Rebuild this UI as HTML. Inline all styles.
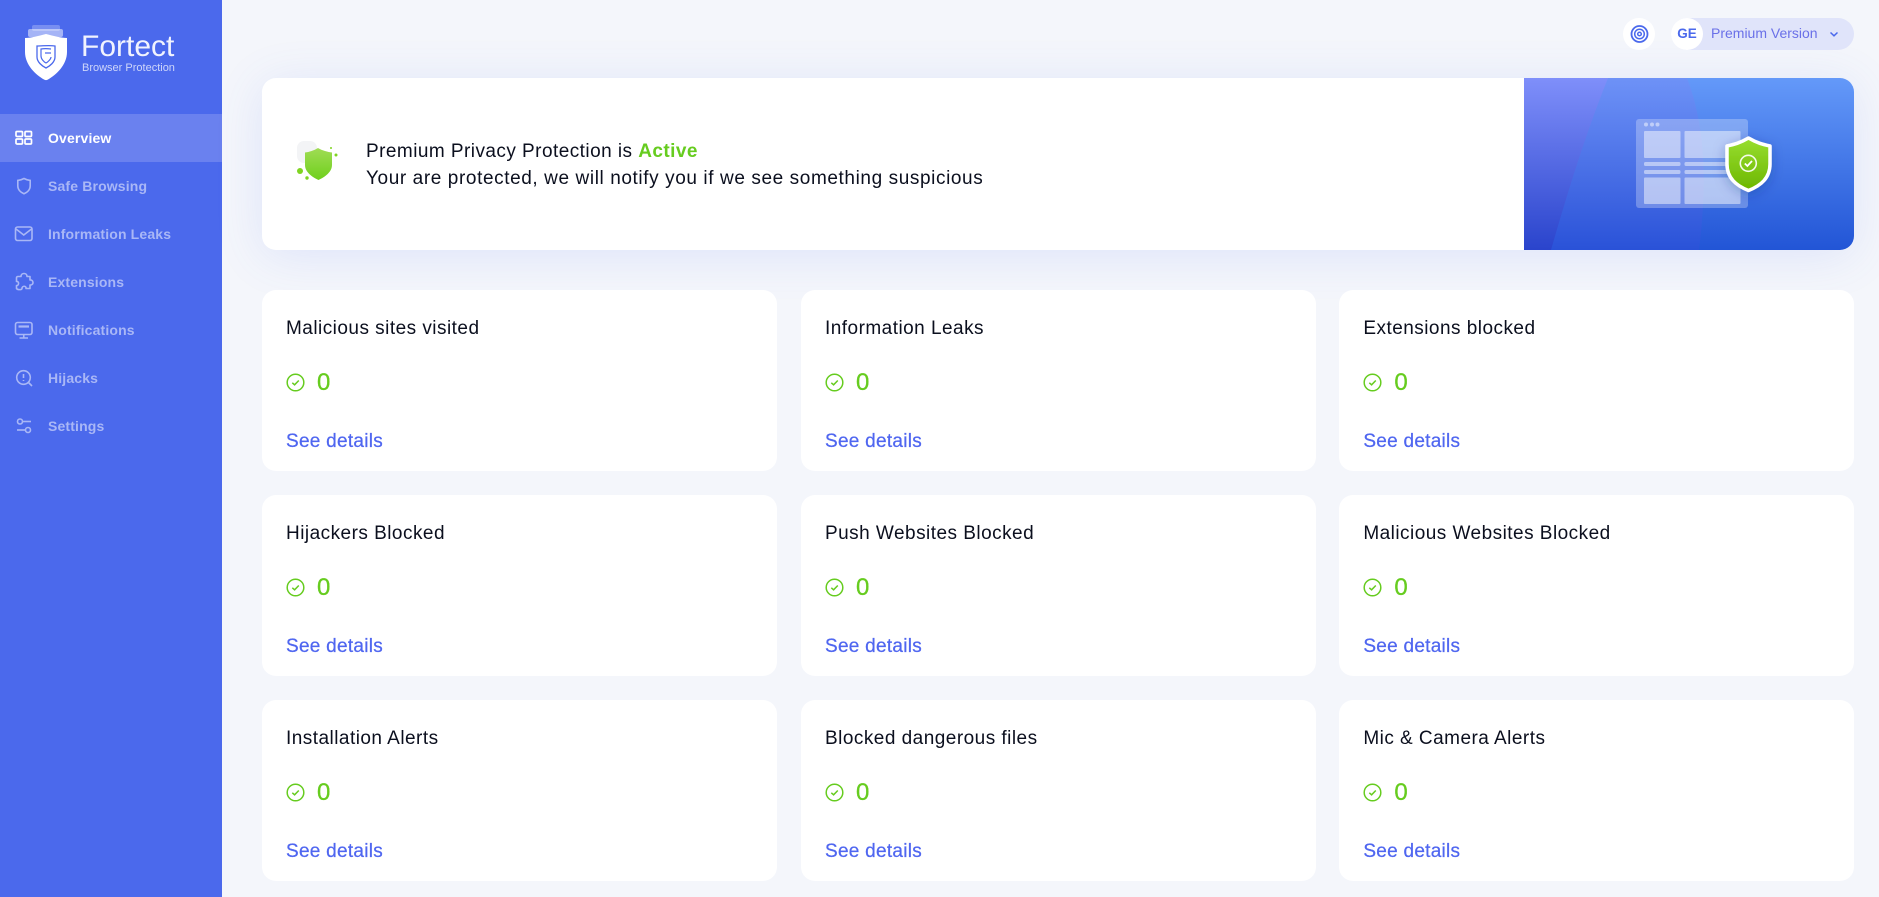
<!DOCTYPE html>
<html lang="en">
<head>
<meta charset="utf-8">
<title>Fortect Browser Protection</title>
<style>
*{margin:0;padding:0;box-sizing:border-box}
html,body{width:1879px;height:897px;overflow:hidden;background:#f4f6fb;font-family:"Liberation Sans",sans-serif}
#side{position:absolute;left:0;top:0;width:222px;height:897px;background:#4b69ec}
.nav{position:absolute;left:0;width:222px;height:48px;line-height:48px;padding-left:48px;font-size:14px;font-weight:700;letter-spacing:.15px;color:#a9b7f6}
.nav.on{background:#6a81ef;color:#fff}
.nav svg{position:absolute;left:14px;top:14px}
.card{position:absolute;width:514.67px;height:181px;background:#fff;border-radius:14px}
.t{position:absolute;left:24px;top:25px;line-height:28px;font-size:19px;letter-spacing:.47px;color:#0b0f1e;white-space:nowrap}
.c{position:absolute;left:24px;top:83px}
.n{position:absolute;left:55px;top:79px;line-height:28px;font-size:24px;color:#66cc1f;-webkit-text-stroke:.3px #66cc1f}
.d{position:absolute;left:24px;top:138px;line-height:28px;font-size:19px;letter-spacing:.27px;color:#4f66f0;white-space:nowrap;-webkit-text-stroke:.25px #4f66f0}
#hero{position:absolute;left:262px;top:78px;width:1592px;height:172px;background:#fff;border-radius:14px;box-shadow:0 6px 48px rgba(75,105,236,.13);overflow:hidden}
.h{position:absolute;left:104px;line-height:27px;font-size:19px;white-space:nowrap;color:#0b0f1e}
</style>
</head>
<body>
<div id="side">
  <svg style="position:absolute;left:0;top:0" width="80" height="90" viewBox="0 0 80 90">
    <rect x="32" y="25" width="28" height="6" rx="2" fill="#fff" opacity=".25"/>
    <rect x="28" y="29" width="35" height="8" rx="2" fill="#fff" opacity=".5"/>
    <path d="M25 38C31 38 38 36 46 34C54 36 61 38 67 38V52C67 65 56 75 48 79.500C46.500 80.300 45.500 80.300 44 79.500C36 75 25 65 25 52Z" fill="#fff"/>
    <path d="M37 46C43 46 49 45 55 46V57C55 62 50 66 46 68C42 66 37 62 37 57Z" fill="none" stroke="#4b69ec" stroke-width="1.300"/>
    <path d="M51 49C47 48.500 44 48.500 41 49V56C41 59 44 62 46 63C48 62 51 59 51 57M45 53H51" fill="none" stroke="#4b69ec" stroke-width="1.200"/>
  </svg>
  <div style="position:absolute;left:81px;top:30px;font-size:30px;line-height:34px;color:rgba(255,255,255,.92);white-space:nowrap">Fortect</div>
  <div style="position:absolute;left:82px;top:62px;font-size:11px;line-height:13px;color:rgba(255,255,255,.72);white-space:nowrap">Browser Protection</div>

  <div class="nav on" style="top:114px"><svg width="20" height="20" viewBox="0 0 20 20" fill="none" stroke="#fff" stroke-width="1.700"><rect x="2" y="3.500" width="6.500" height="5" rx="1"/><rect x="11" y="3.500" width="6.500" height="5" rx="1"/><rect x="2" y="11" width="6.500" height="5" rx="1"/><rect x="11" y="11" width="6.500" height="5" rx="1"/></svg>Overview</div>
  <div class="nav" style="top:162px"><svg width="20" height="20" viewBox="0 0 20 20" fill="none" stroke="#a9b7f6" stroke-width="1.600"><path d="M10 2.500C12 3.600 14 4.200 16.200 4.400V10C16.200 13.600 13.400 16.400 10 17.800C6.600 16.400 3.800 13.600 3.800 10V4.400C6 4.200 8 3.600 10 2.500Z"/></svg>Safe Browsing</div>
  <div class="nav" style="top:210px"><svg width="20" height="20" viewBox="0 0 20 20" fill="none" stroke="#a9b7f6" stroke-width="1.600"><rect x="1.500" y="3" width="16.500" height="13.500" rx="2"/><path d="M2 5L9.750 11L17.500 5"/></svg>Information Leaks</div>
  <div class="nav" style="top:258px"><svg width="20" height="20" viewBox="0 0 20 20" fill="none" stroke="#a9b7f6" stroke-width="1.600" stroke-linejoin="round"><path d="M7 4.500C7 0.500 13 0.500 13 4.500H16V8C20 7.500 20 13.500 16 13V16.500H12C12.500 13.500 8 13.500 8 16.500C7.800 18 3.500 18 2.500 16.500V13.500C5 14 5.500 9 2.500 9.500V6C2.500 5 3 4.500 4 4.500Z"/></svg>Extensions</div>
  <div class="nav" style="top:306px"><svg width="20" height="20" viewBox="0 0 20 20" fill="none" stroke="#a9b7f6" stroke-width="1.600"><rect x="1.500" y="2.500" width="16.500" height="12" rx="2"/><path d="M4.500 6.500H15" stroke-width="2.200"/><path d="M9.750 14.500V18M5.500 18H14"/></svg>Notifications</div>
  <div class="nav" style="top:354px"><svg width="20" height="20" viewBox="0 0 20 20" fill="none" stroke="#a9b7f6" stroke-width="1.600"><circle cx="9.500" cy="9.500" r="6.800"/><path d="M14.500 14.500L18 18M9.500 6V10M9.500 12V13"/></svg>Hijacks</div>
  <div class="nav" style="top:402px"><svg width="20" height="20" viewBox="0 0 20 20" fill="none" stroke="#a9b7f6" stroke-width="1.600"><circle cx="6" cy="5.500" r="2.500"/><path d="M8.500 5.500H17"/><circle cx="14" cy="14" r="2.500"/><path d="M3 14H11.500"/></svg>Settings</div>
</div>

<div id="hero">
  <svg style="position:absolute;left:28px;top:60px" width="48" height="46" viewBox="0 0 48 46">
    <defs><linearGradient id="g1" x1="0" y1="0" x2="0" y2="1"><stop offset="0" stop-color="#a0dc55"/><stop offset="1" stop-color="#6fd01c"/></linearGradient></defs>
    <rect x="7" y="3" width="20" height="22" rx="7" fill="#f3f4f6"/>
    <path d="M28 10C24 12.500 19 14 15 14.500V27C15 34 22 39 28.500 42C35 39 42 34 42 27V14.500C38 14 32 12.500 28 10Z" fill="url(#g1)"/>
    <circle cx="10" cy="33" r="3" fill="#7fd421"/><circle cx="17" cy="40" r="1.700" fill="#7fd421"/><circle cx="46" cy="17" r="1.500" fill="#7fd421"/><circle cx="41" cy="10" r="1" fill="#7fd421"/>
  </svg>
  <div class="h" style="top:60px;letter-spacing:.45px">Premium Privacy Protection is <b style="color:#66cc1f">Active</b></div>
  <div class="h" style="top:87px;letter-spacing:.6px">Your are protected, we will notify you if we see something suspicious</div>
  <svg style="position:absolute;left:1262px;top:0" width="330" height="172" viewBox="0 0 330 172">
    <defs>
      <linearGradient id="b" x1="0" y1="0" x2="0" y2="1"><stop offset="0" stop-color="#6499f9"/><stop offset="1" stop-color="#2255d6"/></linearGradient>
      <linearGradient id="m" x1="0" y1="0" x2="0" y2="1"><stop offset="0" stop-color="#6e92f7"/><stop offset="1" stop-color="#2a52d8"/></linearGradient>
      <linearGradient id="p" x1="0" y1="0" x2="0" y2="1"><stop offset="0" stop-color="#7f8ffa"/><stop offset="1" stop-color="#2a44cc"/></linearGradient>
      <linearGradient id="s" x1="0" y1="0" x2="0" y2="1"><stop offset="0" stop-color="#98de30"/><stop offset="1" stop-color="#6cb600"/></linearGradient>
      <filter id="sh" x="-40%" y="-40%" width="180%" height="180%"><feDropShadow dx="0" dy="3" stdDeviation="6" flood-color="#10307a" flood-opacity=".3"/></filter>
    </defs>
    <rect width="330" height="172" fill="url(#b)"/>
    <path d="M0 0H163C178 40 185 90 175 172H0Z" fill="url(#m)"/>
    <path d="M0 0H84C60 60 42 120 27 172H0Z" fill="url(#p)"/>
    <rect x="112" y="41" width="112" height="89" rx="3" fill="#fff" opacity=".27"/>
    <g fill="#fff" opacity=".47">
      <circle cx="122" cy="46.500" r="2"/><circle cx="128" cy="46.500" r="2"/><circle cx="133.500" cy="46.500" r="2"/>
      <rect x="120" y="53" width="36.500" height="27" rx="1"/><rect x="160.500" y="53" width="56" height="27" rx="1"/>
      <rect x="120" y="84" width="36.500" height="4" rx="1.500"/><rect x="160.500" y="84" width="56" height="4" rx="1.500"/>
      <rect x="120" y="92" width="36.500" height="4" rx="1.500"/><rect x="160.500" y="92" width="56" height="4" rx="1.500"/>
      <rect x="120" y="99.500" width="36.500" height="26.500" rx="1"/><rect x="160.500" y="99.500" width="56" height="26.500" rx="1"/>
    </g>
    <path d="M224.500 60C216 65 210 66.500 203 68V86C203 100 212 107.500 224.500 112.500C237 107.500 246 100 246 86V68C239 66.500 233 65 224.500 60Z" fill="url(#s)" stroke="#fff" stroke-width="3.500" stroke-linejoin="round" filter="url(#sh)"/>
    <circle cx="224.300" cy="85.300" r="8" fill="none" stroke="#fff" stroke-width="1.600" opacity=".9"/>
    <path d="M220.800 85.500L223.400 88L228 83" fill="none" stroke="#fff" stroke-width="1.800"/>
  </svg>
</div>

<div style="position:absolute;left:1623px;top:18px;width:32px;height:32px;border-radius:50%;background:#fff"></div>
<svg style="position:absolute;left:1623px;top:18px" width="32" height="32" viewBox="0 0 32 32" fill="none" stroke="#4b69ec"><circle cx="16.500" cy="16" r="8" stroke-width="1.800"/><circle cx="16.500" cy="16" r="4.800" stroke-width="1.500"/><circle cx="16.500" cy="16" r="1.800" stroke-width="1.500"/></svg>
<div style="position:absolute;left:1671px;top:18px;width:183px;height:32px;border-radius:16px;background:#e0e4fa"></div>
<div style="position:absolute;left:1671px;top:18px;width:32px;height:32px;border-radius:50%;background:#fff;text-align:center;line-height:32px;font-size:13.500px;font-weight:700;color:#4b69ec">GE</div>
<div style="position:absolute;left:1711px;top:18px;line-height:30px;font-size:14px;color:#6a70e8;white-space:nowrap">Premium Version</div>
<svg style="position:absolute;left:1829px;top:29px" width="10" height="10" viewBox="0 0 10 10" fill="none" stroke="#4b69ec" stroke-width="1.500"><path d="M1.500 3.500L5 6.800L8.500 3.500"/></svg>

<svg width="0" height="0" style="position:absolute"><defs><g id="ck" fill="none" stroke="#66cc1f"><circle cx="9.500" cy="9.500" r="8.300" stroke-width="1.500"/><path d="M6.300 9.800L8.600 11.800L12.800 7.500" stroke-width="1.500"/></g></defs></svg>

<div class="card" style="left:262px;top:290px"><div class="t">Malicious sites visited</div><svg class="c" width="19" height="19"><use href="#ck"/></svg><div class="n">0</div><div class="d">See details</div></div>
<div class="card" style="left:801px;top:290px"><div class="t">Information Leaks</div><svg class="c" width="19" height="19"><use href="#ck"/></svg><div class="n">0</div><div class="d">See details</div></div>
<div class="card" style="left:1339.330px;top:290px"><div class="t">Extensions blocked</div><svg class="c" width="19" height="19"><use href="#ck"/></svg><div class="n">0</div><div class="d">See details</div></div>
<div class="card" style="left:262px;top:495px"><div class="t">Hijackers Blocked</div><svg class="c" width="19" height="19"><use href="#ck"/></svg><div class="n">0</div><div class="d">See details</div></div>
<div class="card" style="left:801px;top:495px"><div class="t">Push Websites Blocked</div><svg class="c" width="19" height="19"><use href="#ck"/></svg><div class="n">0</div><div class="d">See details</div></div>
<div class="card" style="left:1339.330px;top:495px"><div class="t">Malicious Websites Blocked</div><svg class="c" width="19" height="19"><use href="#ck"/></svg><div class="n">0</div><div class="d">See details</div></div>
<div class="card" style="left:262px;top:700px"><div class="t">Installation Alerts</div><svg class="c" width="19" height="19"><use href="#ck"/></svg><div class="n">0</div><div class="d">See details</div></div>
<div class="card" style="left:801px;top:700px"><div class="t">Blocked dangerous files</div><svg class="c" width="19" height="19"><use href="#ck"/></svg><div class="n">0</div><div class="d">See details</div></div>
<div class="card" style="left:1339.330px;top:700px"><div class="t">Mic &amp; Camera Alerts</div><svg class="c" width="19" height="19"><use href="#ck"/></svg><div class="n">0</div><div class="d">See details</div></div>
</body>
</html>
